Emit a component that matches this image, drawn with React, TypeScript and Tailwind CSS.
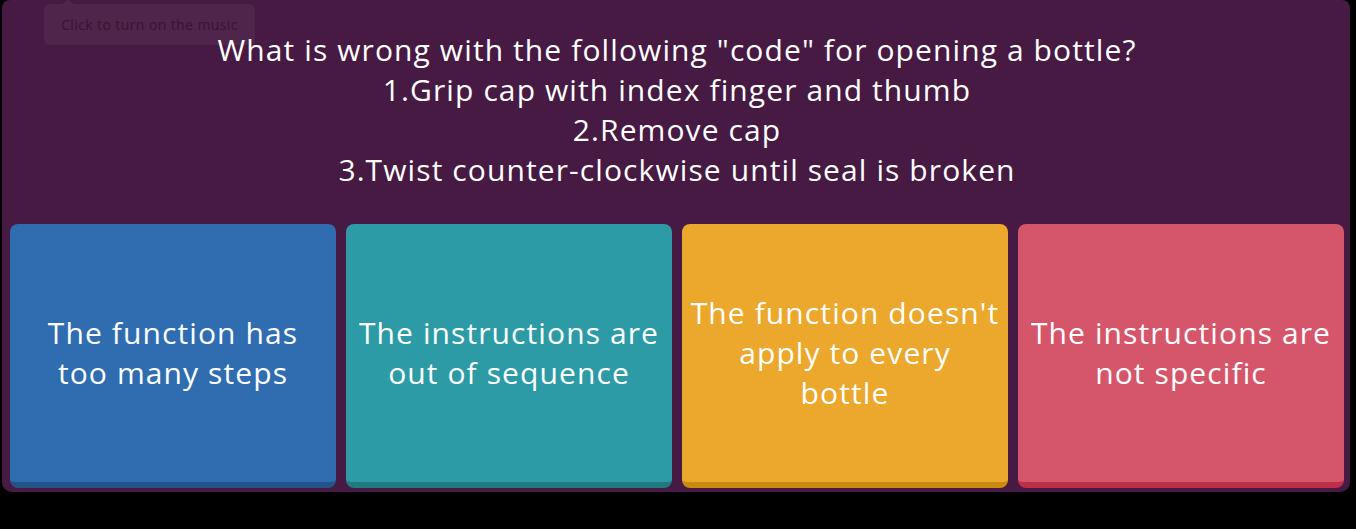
const answers = [
  { lines: ['The function has', 'too many steps'], face: 'bg-[#2f6db0]', edge: 'border-[#245487]' },
  { lines: ['The instructions are', 'out of sequence'], face: 'bg-[#2d9ba6]', edge: 'border-[#217a80]' },
  { lines: ["The function doesn't", 'apply to every', 'bottle'], face: 'bg-[#eca82c]', edge: 'border-[#c98a12]' },
  { lines: ['The instructions are', 'not specific'], face: 'bg-[#d5566a]', edge: 'border-[#bd2f47]' },
]

export default function App() {
  return (
    <div className="h-[529px] w-[1356px] bg-black font-['Open_Sans','Noto_Sans',sans-serif] text-white [font-variant-ligatures:none]">
      <div className="relative ml-[2px] w-[1348px] rounded-b-[10px] rounded-t-[8px] bg-[#461a42] pb-[4px] pl-[8px] pr-[6px]">
        {/* music tooltip */}
        <div className="absolute left-[42px] top-[4px] flex h-[41px] w-[211px] items-center justify-center rounded-[6px] bg-white/[0.05] text-[14px] tracking-[0.4px] text-[#3a1336]">
          <span className="absolute -top-[4px] left-[18px] h-0 w-0 border-x-[6px] border-b-[4px] border-x-transparent border-b-white/[0.05]" />
          Click to turn on the music
        </div>

        <div className="flex flex-col items-center pt-[30px] pb-[34px] text-center text-[30px] leading-[40px] tracking-[1.1px]">
          <div>What is wrong with the following "code" for opening a bottle?</div>
          <div>1.Grip cap with index finger and thumb</div>
          <div>2.Remove cap</div>
          <div>3.Twist counter-clockwise until seal is broken</div>
        </div>

        <div className="grid grid-cols-4 gap-[10px]">
          {answers.map(a => (
            <div
              key={a.lines[0] + a.face}
              className={`flex h-[264px] flex-col items-center justify-center rounded-[8px] border-b-[6px] text-center text-[30px] leading-[40px] tracking-[1.1px] whitespace-nowrap ${a.face} ${a.edge}`}
            >
              {a.lines.map(l => (
                <div key={l}>{l}</div>
              ))}
            </div>
          ))}
        </div>
      </div>
    </div>
  )
}
